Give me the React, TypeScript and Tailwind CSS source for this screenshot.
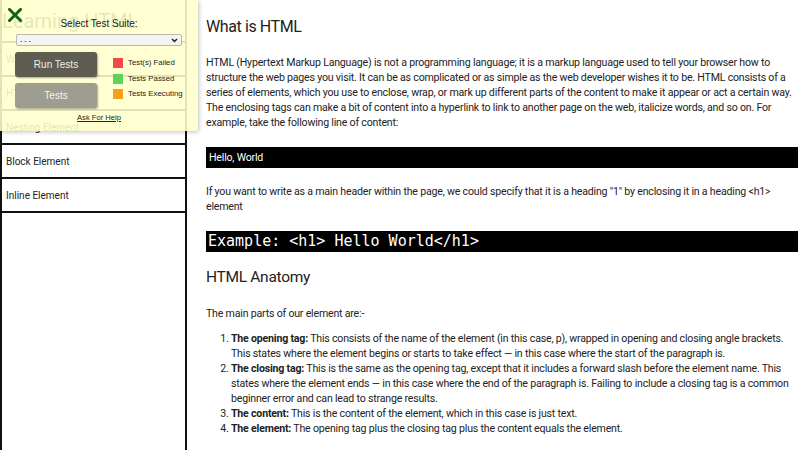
import React from 'react';

const NAV_ITEMS = ['What is HTML', 'HTML Anatomy', 'Nesting Element', 'Block Element', 'Inline Element'];

const LEGEND = [
  { label: 'Test(s) Failed', color: 'bg-[#f24b46]' },
  { label: 'Tests Passed', color: 'bg-[#5ed35b]' },
  { label: 'Tests Executing', color: 'bg-[#f6a11e]' },
];

const TestSuite: React.FC = () => (
  <div className="absolute top-0 left-0 w-[198px] h-[131px] bg-[rgba(255,255,204,0.88)] rounded-br-[4px] shadow-[1px_1px_4px_rgba(0,0,0,0.25)] font-['Liberation_Sans',Arial,sans-serif] text-[#222]">
    {/* close */}
    <svg className="absolute top-[8px] left-[8px]" width="14" height="14" viewBox="0 0 14 14">
      <path d="M1.5 1.5 L12.5 12.5 M12.5 1.5 L1.5 12.5" stroke="#0d650d" strokeWidth="3" strokeLinecap="square" />
    </svg>

    <div className="pt-[17px] text-center text-[10px] leading-[13px]">Select Test Suite:</div>

    <div className="mx-[16px] mt-[4px] h-[12px] bg-[#f4f4f0] border border-[#b8b8b0] rounded-[2px] flex items-center justify-between px-[3px]">
      <span className="text-[7px] leading-none">- - -</span>
      <svg width="7" height="5" viewBox="0 0 7 5">
        <path d="M1 1 L3.5 3.5 L6 1" stroke="#222" strokeWidth="1.5" fill="none" />
      </svg>
    </div>

    <div className="flex mt-[6px] pl-[15px] gap-[16px]">
      <div className="flex flex-col gap-[6px]">
        <div className="w-[82px] h-[25px] rounded-[3px] bg-[#5f5d51] text-[#eeeeea] text-[10px] flex items-center justify-center shadow-[1px_1px_2px_rgba(0,0,0,0.35)]">
          Run Tests
        </div>
        <div className="w-[82px] h-[25px] rounded-[3px] bg-[#9f9d90] text-[#f4f4f0] text-[10px] flex items-center justify-center shadow-[1px_1px_2px_rgba(0,0,0,0.35)]">
          Tests
        </div>
      </div>
      <div className="flex flex-col gap-[5.5px] pt-[6px]">
        {LEGEND.map((l) => (
          <div key={l.label} className="flex items-center h-[10px] gap-[5px]">
            <span className={`w-[10px] h-[10px] ${l.color}`}></span>
            <span className="text-[7.8px] leading-none">{l.label}</span>
          </div>
        ))}
      </div>
    </div>

    <div className="mt-[3.5px] text-center text-[7.6px] leading-[11px] underline">Ask For Help</div>
  </div>
);

const App: React.FC = () => {
  return (
    <div className="relative w-[800px] h-[450px] overflow-hidden bg-white font-['Roboto',sans-serif] text-[#222]">
      <div className="flex h-full">
        {/* Sidebar */}
        <nav className="w-[187px] h-full shrink-0 border-x-2 border-[#111] bg-white">
          <header className="h-[43px] border-b-2 border-[#111] flex items-center text-[20px] leading-none text-[#333]">
            Learning HTML
          </header>
          {NAV_ITEMS.map((item) => (
            <div key={item} className="h-[34px] border-b-2 border-[#111] flex items-center pl-[4px] text-[10px]">
              {item}
            </div>
          ))}
        </nav>

        {/* Main */}
        <main className="flex-1 pl-[19px] pr-[2px] text-[10.6px] leading-[15px] tracking-[-0.2px]">
          <h1 className="mt-[16px] text-[16px] leading-[22px] tracking-[-0.4px]">What is HTML</h1>
          <p className="mt-[16.5px]">
            HTML (Hypertext Markup Language) is not a programming language; it is a markup language used to tell your browser how to
            structure the web pages you visit. It can be as complicated or as simple as the web developer wishes it to be. HTML consists of a
            series of elements, which you use to enclose, wrap, or mark up different parts of the content to make it appear or act a certain way.
            The enclosing tags can make a bit of content into a hyperlink to link to another page on the web, italicize words, and so on. For
            example, take the following line of content:
          </p>
          <div className="mt-[17.5px] h-[21px] bg-black text-white leading-[21px] px-[3px]">Hello, World</div>
          <p className="mt-[15.5px]">
            If you want to write as a main header within the page, we could specify that it is a heading "1" by enclosing it in a heading &lt;h1&gt;
            element
          </p>
          <div className="mt-[17.5px] h-[21px] bg-black text-white px-[2px] font-['DejaVu_Sans_Mono',monospace] text-[15px] leading-[21px] tracking-normal whitespace-pre">
            Example: &lt;h1&gt; Hello World&lt;/h1&gt;
          </div>
          <h2 className="mt-[14.5px] text-[15.5px] leading-[21px] tracking-[-0.3px]">HTML Anatomy</h2>
          <p className="mt-[18px]">The main parts of our element are:-</p>
          <ol className="mt-[10px] list-decimal pl-[25px]">
            <li>
              <b>The opening tag:</b> This consists of the name of the element (in this case, p), wrapped in opening and closing angle brackets.
              This states where the element begins or starts to take effect — in this case where the start of the paragraph is.
            </li>
            <li>
              <b>The closing tag:</b> This is the same as the opening tag, except that it includes a forward slash before the element name. This
              states where the element ends — in this case where the end of the paragraph is. Failing to include a closing tag is a common
              beginner error and can lead to strange results.
            </li>
            <li>
              <b>The content:</b> This is the content of the element, which in this case is just text.
            </li>
            <li>
              <b>The element:</b> The opening tag plus the closing tag plus the content equals the element.
            </li>
          </ol>
        </main>
      </div>

      <TestSuite />
    </div>
  );
};

export default App;
